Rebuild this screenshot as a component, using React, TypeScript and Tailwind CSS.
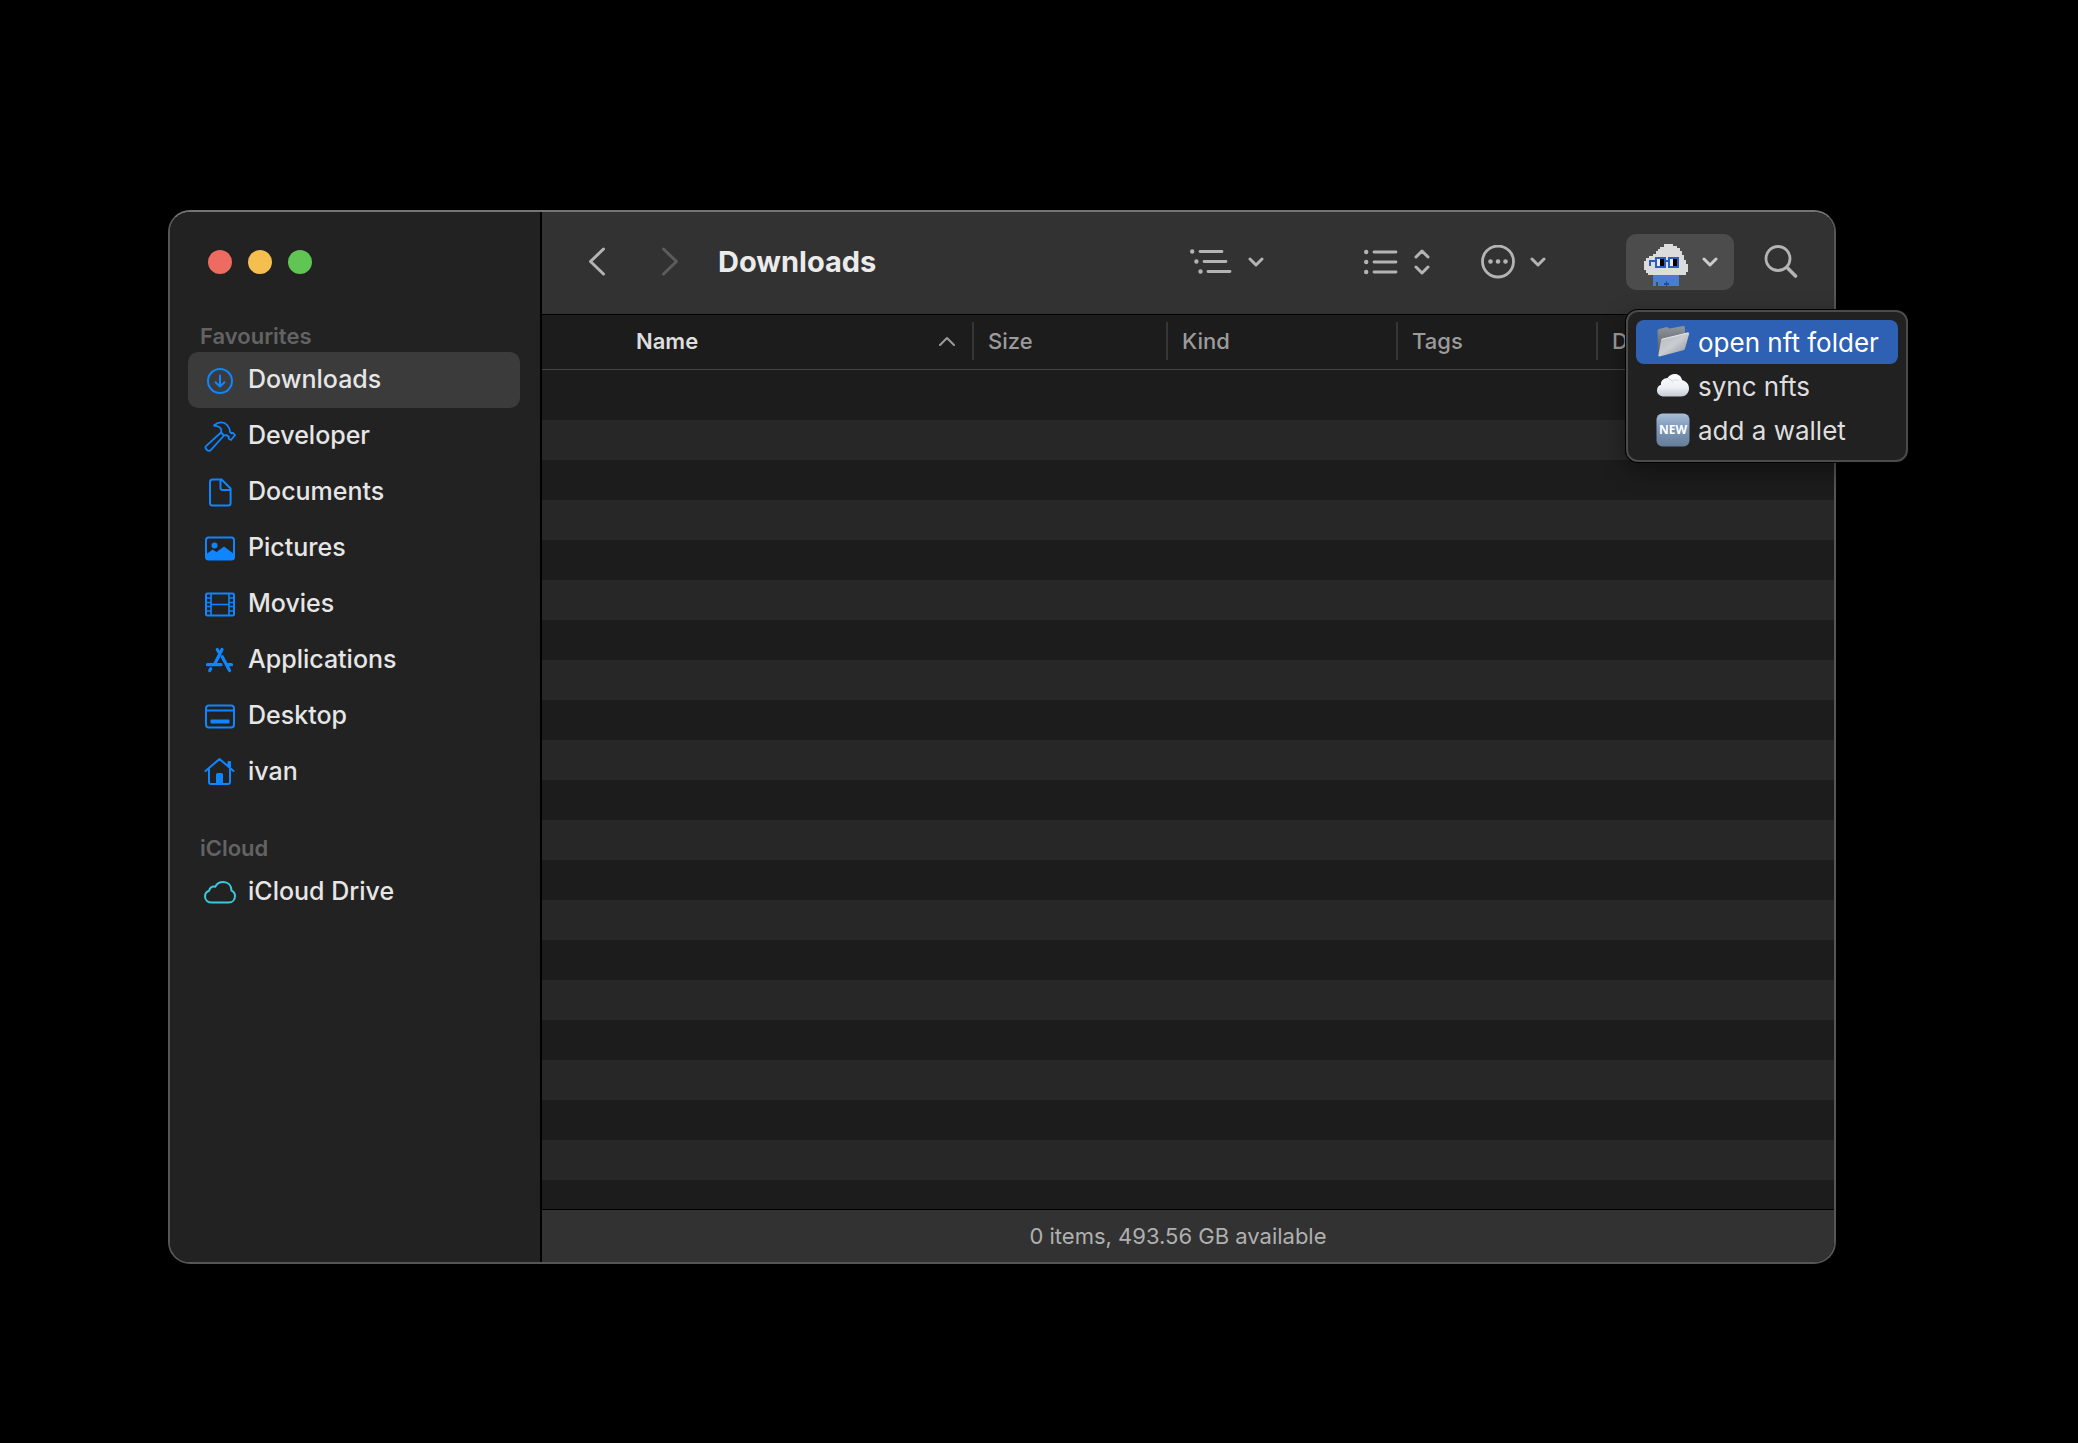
import { ReactNode } from 'react';

interface SidebarItem {
  name: string;
  icon: ReactNode;
  active?: boolean;
}

interface SidebarSection {
  title: string;
  items: SidebarItem[];
}

const Glyph = ({ children }: { children: ReactNode }) => (
  <svg viewBox="0 0 32 32" className="w-8 h-8 shrink-0" fill="none" stroke="currentColor" strokeWidth="2" strokeLinecap="round" strokeLinejoin="round" aria-hidden="true">
    {children}
  </svg>
);

const SECTIONS: SidebarSection[] = [
  {
    title: 'Favourites',
    items: [
      {
        name: 'Downloads',
        active: true,
        icon: (
          <Glyph>
            <circle cx="16" cy="17" r="12" />
            <path d="M16 11.500v11M11.500 18.200l4.500 4.300 4.500-4.300" />
          </Glyph>
        ),
      },
      {
        name: 'Developer',
        icon: (
          <Glyph>
            <path strokeWidth="1.800" d="M10 5.500C14 1.500 20 1.500 23 5c2 2.300 3.300 4 3 7l1.500 1.300 1.500-.5L31 15l-4 5-2.400-1.500.2-1.700-2-1.600-2.800.3L7 29.800C5.800 31.200 4.300 31.200 3 30S.8 27.500 2 26.200L17 12.500c1-3-.5-5.700-3.500-6.200-1.300-.2-2.500-.1-3.500-.8zM17 12.500l3 3" />
          </Glyph>
        ),
      },
      {
        name: 'Documents',
        icon: (
          <Glyph>
            <path d="M17.500 3.500H8.500C6.800 3.500 6 4.300 6 6v21c0 1.700.8 2.500 2.500 2.500h15.600c1.700 0 2.500-.8 2.500-2.500V12.500zM16.500 3.500V12c0 1.300.7 2 2 2h8" />
          </Glyph>
        ),
      },
      {
        name: 'Pictures',
        icon: (
          <Glyph>
            <rect x="2" y="5.500" width="28" height="22" rx="2.500" />
            <circle cx="10.500" cy="13.500" r="3" fill="currentColor" stroke="none" />
            <path d="M2 22.500l6.500-5 4 2.500 7.500-5.500 10 7.500v3.500q0 2-2 2H4q-2 0-2-2z" fill="currentColor" stroke="none" />
          </Glyph>
        ),
      },
      {
        name: 'Movies',
        icon: (
          <Glyph>
            <rect x="2" y="5.500" width="28" height="22" rx="1.500" />
            <path strokeWidth="1.600" d="M7 5.500v22M25 5.500v22M7 16.500h18M2 10h5M2 14.500h5M2 18.500h5M2 23h5M25 10h5M25 14.500h5M25 18.500h5M25 23h5" />
          </Glyph>
        ),
      },
      {
        name: 'Applications',
        icon: (
          <Glyph>
            <path strokeWidth="3.200" d="M18 5.500L10.500 20.500M13.200 5.500l1.500 2.300M18.200 12.700l7.400 13.800M3.500 20.700h13.500M24.500 20.700h3M6.700 24.800L5.700 26.500" />
          </Glyph>
        ),
      },
      {
        name: 'Desktop',
        icon: (
          <Glyph>
            <rect x="2" y="5.500" width="28" height="22" rx="3" />
            <path d="M2 10.500h28" />
            <rect x="6.500" y="19.500" width="19" height="4" rx="1" fill="currentColor" stroke="none" />
          </Glyph>
        ),
      },
      {
        name: 'ivan',
        icon: (
          <Glyph>
            <path d="M1.500 15L15.500 3l14 12M5 13v13c0 1.300.7 2 2 2h17c1.300 0 2-.7 2-2V13M24.500 9.500V6h1.500v5" />
            <path d="M12 28V18.500q0-1.500 1.500-1.500h4q1.500 0 1.500 1.500V28z" fill="currentColor" stroke="none" />
          </Glyph>
        ),
      },
    ],
  },
  {
    title: 'iCloud',
    items: [
      {
        name: 'iCloud Drive',
        icon: (
          <span className="text-[#3ac8dc]">
            <Glyph>
              <path d="M8 26.500c-4 0-7-2.300-7-6 0-2.800 1.800-5 4.200-5.700.2-3 3-5 6-4 1.500-3 4.400-4.800 8-4.800 5 0 8.300 3.500 8.300 8.700 1.800.8 3.500 2.800 3.500 5.300 0 3.700-2.600 6.500-6.200 6.500z" />
            </Glyph>
          </span>
        ),
      },
    ],
  },
];

const ChevronDown = () => (
  <svg viewBox="0 0 16 10" className="w-4 h-[10px]" fill="none" stroke="currentColor" strokeWidth="3" strokeLinecap="round" strokeLinejoin="round" aria-hidden="true">
    <path d="M2 2l6 6 6-6" />
  </svg>
);

const CloudAvatar = () => (
  <svg viewBox="0 0 44 42" className="mt-[6px] w-11 h-[42px]" shapeRendering="crispEdges" aria-hidden="true">
    <path fill="#dcdcdc" d="M20 0h9v2h4v2h3v3h2v4h2v5h2v4h2v8h-2v3H4v-2H2v-3H0v-9h2v-3h3v-2h4v-2h3V7h2V5h2V3h4z" />
    <path fill="#4a7bd5" d="M9 31h26v11H9z" />
    <path fill="#2a5fbe" d="M5 16h6v-3h11v3h2v-3h11v11H24v-6h-2v6H11v-6H7v4H5z" />
    <path fill="#e8e8e8" d="M13 15h4v7h-4zM26 15h4v7h-4z" />
    <path fill="#000" d="M16 15h4v7h-4zM29 15h4v7h-4z" />
    <path fill="#4a4a4a" d="M12 38h2v4h-2z" />
    <path fill="#1f4ba5" d="M22 37h1v5h-1zM20 39h5v2h-5z" />
  </svg>
);

const FolderEmoji = () => (
  <svg viewBox="0 0 34 34" className="w-[34px] h-[34px]" aria-hidden="true">
    <defs>
      <linearGradient id="folderBack" x1="0" y1="0" x2="0" y2="1">
        <stop offset="0" stopColor="#8f979d" />
        <stop offset="1" stopColor="#4d555b" />
      </linearGradient>
      <linearGradient id="folderFront" x1="0" y1="0" x2="1" y2="1">
        <stop offset="0" stopColor="#b4b9bd" />
        <stop offset="0.500" stopColor="#c9ccd0" />
        <stop offset="1" stopColor="#8b9095" />
      </linearGradient>
    </defs>
    <path d="M1.500 6Q1.500 4.500 3 4l8-2 2.500 1.500L27 1q1.500-.3 1.700 1.200L29.500 10 4 30 2.200 31z" fill="url(#folderBack)" />
    <path d="M5 15.500q.3-1.300 1.500-1.700L32 7.500q1.500-.2 1.200 1.200L29 23.500q-.4 1.400-1.800 1.800L3.500 31.500q-1.500.2-1.200-1.200z" fill="url(#folderFront)" />
    <path d="M5.500 15q.3-.8 1.200-1L32 8" fill="none" stroke="#e3e5e7" />
  </svg>
);

const CloudEmoji = () => (
  <svg viewBox="0 0 34 34" className="w-[34px] h-[34px]" aria-hidden="true">
    <defs>
      <linearGradient id="cloudFill" x1="0" y1="0" x2="0" y2="1">
        <stop offset="0" stopColor="#ffffff" />
        <stop offset="0.600" stopColor="#edf0f5" />
        <stop offset="1" stopColor="#c3cad6" />
      </linearGradient>
    </defs>
    <path d="M8 27.500c-4 0-7-2.500-7-6 0-3 1.500-5.200 4-5.800C4.500 12 7.500 9 11.500 9c1.700-2.500 4.300-4 7.300-4 3.800 0 6.600 2.400 7.400 6.300C30 12 33 15 33 19.500s-3.500 8-8 8z" fill="url(#cloudFill)" />
    <path d="M12 9.700c2.500.3 4 1.800 4.500 3.800M16 12.500c2-2 5-2 7-.5" fill="none" stroke="#d3d8e0" />
  </svg>
);

const NewEmoji = () => (
  <svg viewBox="0 0 34 34" className="w-[34px] h-[34px]" aria-hidden="true">
    <defs>
      <linearGradient id="newFill" x1="0" y1="0" x2="0" y2="1">
        <stop offset="0" stopColor="#a9bdd6" />
        <stop offset="0.400" stopColor="#7f9bbd" />
        <stop offset="1" stopColor="#667d98" />
      </linearGradient>
    </defs>
    <rect x="0.500" y="0.500" width="33" height="33" rx="6" fill="url(#newFill)" />
    <text x="17" y="21" textAnchor="middle" fill="#fff" fontFamily="Open Sans, sans-serif" fontWeight="700" fontSize="12">NEW</text>
  </svg>
);

const MENU = [
  { label: 'open nft folder', icon: <FolderEmoji />, active: true },
  { label: 'sync nfts', icon: <CloudEmoji /> },
  { label: 'add a wallet', icon: <NewEmoji /> },
];

function Sidebar() {
  return (
    <aside className="w-[372px] shrink-0 rounded-l-[20px] border-r-2 border-black bg-[#222222]">
      <div className="flex gap-4 pt-[38px] pl-[38px]">
        <button aria-label="Close" className="w-6 h-6 rounded-full bg-[#ed6b60]" />
        <button aria-label="Minimise" className="w-6 h-6 rounded-full bg-[#f5bf4f]" />
        <button aria-label="Zoom" className="w-6 h-6 rounded-full bg-[#61c554]" />
      </div>

      <nav className="mt-[46px] pl-[18px] pr-5 flex flex-col gap-8">
        {SECTIONS.map((section) => (
          <div key={section.title}>
            <h2 className="h-8 pl-3 text-[22px] leading-8 font-semibold text-[#636363]">{section.title}</h2>
            <ul>
              {section.items.map((item) => (
                <li key={item.name}>
                  <a
                    href="#"
                    className={`h-14 pl-4 flex items-center gap-3 rounded-[10px] text-[25px] font-medium text-[#e6e6e6] ${
                      item.active ? 'bg-[#3b3b3b]' : ''
                    }`}
                  >
                    <span className="text-[#0f86ff]">{item.icon}</span>
                    {item.name}
                  </a>
                </li>
              ))}
            </ul>
          </div>
        ))}
      </nav>
    </aside>
  );
}

function Toolbar() {
  return (
    <header className="h-[103px] shrink-0 flex items-center rounded-tr-[20px] border-b border-black bg-[#323232] pl-[46px] pr-9 pb-[2px] text-[#b4b4b4]">
      <button aria-label="Back">
        <svg viewBox="0 0 18 30" className="w-[18px] h-[30px]" fill="none" stroke="currentColor" strokeWidth="3" strokeLinecap="round" strokeLinejoin="round">
          <path d="M15.500 2L2.500 14.500l13 12.500" />
        </svg>
      </button>
      <button aria-label="Forward" className="ml-[55px] text-[#5c5c5c]">
        <svg viewBox="0 0 18 30" className="w-[18px] h-[30px]" fill="none" stroke="currentColor" strokeWidth="3" strokeLinecap="round" strokeLinejoin="round">
          <path d="M2.500 2l13 12.500-13 12.500" />
        </svg>
      </button>
      <h1 className="ml-[39px] text-[29px] font-bold text-[#ebebeb]">Downloads</h1>

      <div className="ml-auto flex items-center">
        <button aria-label="Group items" className="flex items-center gap-4">
          <svg viewBox="0 0 42 26" className="w-[42px] h-[26px]" fill="none" stroke="currentColor" strokeWidth="2.800" strokeLinecap="round">
            <path d="M10 2.500h22M14 12.500h22M18 22.500h22" />
            <path strokeWidth="4.400" d="M2.200 2.500h.01M6.400 12.500h.01M10.500 22.500h.01" />
          </svg>
          <ChevronDown />
        </button>

        <button aria-label="View as list" className="ml-[100px] flex items-center gap-4">
          <svg viewBox="0 0 34 26" className="w-[34px] h-[26px]" fill="none" stroke="currentColor" strokeWidth="2.800" strokeLinecap="round">
            <path d="M10 3h22M10 13h22M10 23h22" />
            <path strokeWidth="4.400" d="M2.200 3h.01M2.200 13h.01M2.200 23h.01" />
          </svg>
          <svg viewBox="0 0 16 26" className="w-4 h-[26px]" fill="none" stroke="currentColor" strokeWidth="3" strokeLinecap="round" strokeLinejoin="round">
            <path d="M2 8l6-6 6 6M2 18l6 6 6-6" />
          </svg>
        </button>

        <button aria-label="More actions" className="ml-[51px] flex items-center gap-[15px]">
          <svg viewBox="0 0 34 34" className="w-[34px] h-[34px]" fill="none" stroke="currentColor" strokeWidth="2.800" strokeLinecap="round">
            <circle cx="17" cy="16.500" r="15.500" />
            <path strokeWidth="4.600" d="M9.500 16.500h.01M17 16.500h.01M24.500 16.500h.01" />
          </svg>
          <ChevronDown />
        </button>

        <div className="relative ml-20">
          <button aria-label="NFT folder" aria-expanded="true" className="w-[108px] h-14 pl-[18px] flex items-center gap-[14px] rounded-[10px] bg-[#4c4c4c] text-[#cdcdcd]">
            <CloudAvatar />
            <ChevronDown />
          </button>
          <ExtensionMenu />
        </div>

        <button aria-label="Search" className="ml-[30px]">
          <svg viewBox="0 0 34 34" className="w-[34px] h-[34px]" fill="none" stroke="currentColor" strokeLinecap="round">
            <circle cx="14" cy="13.500" r="12" strokeWidth="2.800" />
            <path strokeWidth="3.600" d="M23 22.500l8.500 8.500" />
          </svg>
        </button>
      </div>
    </header>
  );
}

function ExtensionMenu() {
  return (
    <ul role="menu" className="absolute left-0 top-[76px] z-10 w-[282px] p-2 rounded-xl border-2 border-[#4b4b4b] bg-[#212121] shadow-[0_0_0_1px_#000,0_8px_24px_rgba(0,0,0,0.4)]">
      {MENU.map((entry) => (
        <li key={entry.label} role="none">
          <button
            role="menuitem"
            className={`w-full h-11 pl-5 flex items-center gap-2 rounded-lg text-[26px] whitespace-nowrap ${
              entry.active ? 'bg-[#2e60b3] text-white' : 'text-[#dedede]'
            }`}
          >
            {entry.icon}
            {entry.label}
          </button>
        </li>
      ))}
    </ul>
  );
}

const COLUMNS = [
  { label: 'Size', width: 'w-[194px]' },
  { label: 'Kind', width: 'w-[230px]' },
  { label: 'Tags', width: 'w-[200px]' },
  { label: 'D', width: 'w-[238px]' },
];

function FileList() {
  return (
    <div className="flex-1 flex flex-col bg-[#1c1c1c]">
      <table className="w-full table-fixed text-[22px] text-[#9b9b9b]">
        <thead>
          <tr className="h-[54px] border-b border-[#444444]">
            <th scope="col" aria-sort="ascending" className="p-0 pt-[7px] align-top text-left font-semibold text-[#dedede]">
              <div className="h-[38px] pl-[94px] pr-[17px] flex items-center justify-between">
                Name
                <svg viewBox="0 0 16 10" className="w-4 h-[10px] text-[#9b9b9b]" fill="none" stroke="currentColor" strokeWidth="2" strokeLinecap="round" strokeLinejoin="round" aria-hidden="true">
                  <path d="M1 9l7-7 7 7" />
                </svg>
              </div>
            </th>
            {COLUMNS.map((column) => (
              <th key={column.label} scope="col" className={`p-0 pt-[7px] align-top text-left font-medium ${column.width}`}>
                <div className="h-[38px] pl-[14px] flex items-center border-l-2 border-[#363636] whitespace-nowrap">
                  {column.label}
                </div>
              </th>
            ))}
          </tr>
        </thead>
      </table>

      {/* Empty folder, only the alternating row stripes */}
      <div className="flex-1 mt-[10px] bg-[repeating-linear-gradient(to_bottom,#1c1c1c_0px,#1c1c1c_40px,#272727_40px,#272727_80px)]" />
    </div>
  );
}

export default function App() {
  return (
    <div className="min-h-screen flex bg-black pt-[210px] pr-[242px] pb-[179px] pl-[168px] font-['Inter',sans-serif]">
      <div className="flex-1 flex rounded-[22px] border-2 border-[#565656] border-t-[#747474]">
        <Sidebar />
        <main className="flex-1 min-w-0 flex flex-col">
          <Toolbar />
          <FileList />
          <footer className="h-[53px] shrink-0 pr-5 flex items-center justify-center rounded-br-[20px] border-t border-black bg-[#323232] text-[22px] text-[#b0b0b0]">
            0 items, 493.56 GB available
          </footer>
        </main>
      </div>
    </div>
  );
}
